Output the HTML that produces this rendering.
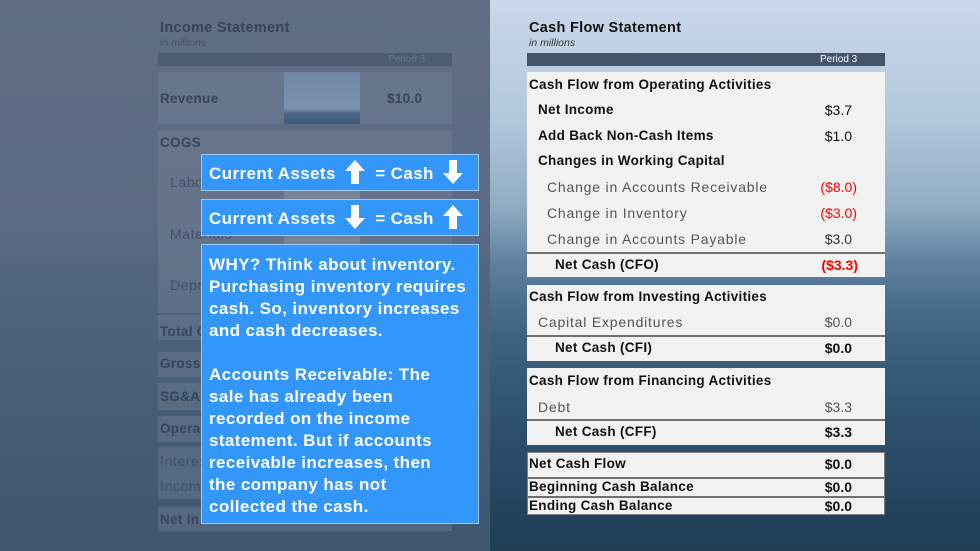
<!DOCTYPE html>
<html><head><meta charset="utf-8"><style>
*{margin:0;padding:0;box-sizing:border-box}
body{width:980px;height:551px;overflow:hidden;position:relative;font-family:"Liberation Sans",sans-serif;
background:linear-gradient(180deg,#c9d8ea 0%,#b3c7dc 22%,#8eaac2 38%,#5d809e 48%,#3d6482 60%,#2c506c 78%,#1f3d55 100%);}
.a{position:absolute}
#left{left:0;top:0;width:490px;height:551px;background:linear-gradient(180deg,#5f6e85 0%,#5b6b83 40%,#4b6079 62%,#3f5670 100%)}
.lb{position:absolute;background:rgba(120,135,155,.35)}
.lt{position:absolute;color:#37455a;font-weight:bold;font-size:13.5px;letter-spacing:.3px}
.lt2{position:absolute;color:#42506a;font-size:14px;letter-spacing:.6px}
.blue{position:absolute;left:201px;width:278px;background:#3396fb;border:1px solid #9cc8f2;color:#fff;font-weight:bold;font-size:17px;letter-spacing:.4px}
.row{position:absolute;left:0;width:100%;height:20px;font-size:13.5px;letter-spacing:.3px;color:#111}
.row span{position:absolute;top:0}
.g{font-size:14px;letter-spacing:.8px;color:#555}
.v{right:33px;text-align:right;font-size:14px;letter-spacing:0}
.box{position:absolute;left:527px;width:358px;background:#f2f2f2}
.b{font-weight:bold}
.r{color:#f00}
.ln{position:absolute;left:0;width:100%;height:2px;background:#6f6f6f}
</style></head><body>
<div class="a" id="left">
 <div class="lt" style="left:160px;top:20px;font-size:14.5px">Income Statement</div>
 <div class="a" style="left:160px;top:37px;font-size:10.5px;font-style:italic;color:#46536a">in millions</div>
 <div class="a" style="left:158px;top:53px;width:294px;height:13px;background:#4c5c73"></div>
 <div class="a" style="left:388px;top:54px;font-size:10px;color:#66768c">Period 3</div>
 <div class="lb" style="left:158px;top:72px;width:294px;height:52px"></div>
 <div class="a" style="left:284px;top:72px;width:76px;height:52px;background:linear-gradient(180deg,#6f88a6 0%,#7c93ae 70%,#4a6485 80%,#405a7a 100%)"></div>
 <div class="lt" style="left:160px;top:91px">Revenue</div>
 <div class="lt" style="left:387px;top:91px">$10.0</div>
 <div class="lb" style="left:158px;top:130px;width:294px;height:183px"></div>
 <div class="a" style="left:284px;top:185px;width:76px;height:128px;background:rgba(140,150,165,.5)"></div>
 <div class="lt" style="left:160px;top:135px">COGS</div>
 <div class="lt2" style="left:170px;top:174px">Labor</div>
 <div class="lt2" style="left:170px;top:226px">Materials</div>
 <div class="lt2" style="left:170px;top:277px">Depr</div>
 <div class="lb" style="left:158px;top:315px;width:294px;height:25px"></div><div class="lt" style="left:160px;top:324px">Total C</div>
 <div class="lb" style="left:158px;top:352px;width:294px;height:25px"></div><div class="lt" style="left:160px;top:356px">Gross</div>
 <div class="lb" style="left:158px;top:383px;width:294px;height:27px"></div><div class="lt" style="left:160px;top:389px">SG&amp;A</div>
 <div class="lb" style="left:158px;top:416px;width:294px;height:26px"></div><div class="lt" style="left:160px;top:421px">Opera</div>
 <div class="lb" style="left:158px;top:447px;width:294px;height:52px"></div><div class="lt2" style="left:160px;top:453px">Interest</div><div class="lt2" style="left:160px;top:478px">Income</div>
 <div class="lb" style="left:158px;top:507px;width:294px;height:24px"></div><div class="lt" style="left:160px;top:512px">Net In</div>
</div>

<div class="blue" style="top:154px;height:37px;padding:5px 0 0 7px">Current Assets
 <svg width="20" height="24" viewBox="0 0 20 24" style="vertical-align:-5px;margin-left:4px"><path d="M10 0 L20 11 L14 11 L14 24 L6 24 L6 11 L0 11Z" fill="#fff"/></svg> &nbsp;= Cash
 <svg width="20" height="24" viewBox="0 0 20 24" style="vertical-align:-5px;margin-left:4px"><path d="M10 24 L20 13 L14 13 L14 0 L6 0 L6 13 L0 13Z" fill="#fff"/></svg></div>
<div class="blue" style="top:199px;height:37px;padding:5px 0 0 7px">Current Assets
 <svg width="20" height="24" viewBox="0 0 20 24" style="vertical-align:-5px;margin-left:4px"><path d="M10 24 L20 13 L14 13 L14 0 L6 0 L6 13 L0 13Z" fill="#fff"/></svg> &nbsp;= Cash
 <svg width="20" height="24" viewBox="0 0 20 24" style="vertical-align:-5px;margin-left:4px"><path d="M10 0 L20 11 L14 11 L14 24 L6 24 L6 11 L0 11Z" fill="#fff"/></svg></div>
<div class="blue" style="top:244px;height:280px;padding:9px 0 0 7px;line-height:22px">WHY? Think about inventory.<br>Purchasing inventory requires<br>cash. So, inventory increases<br>and cash decreases.<br><br>Accounts Receivable: The<br>sale has already been<br>recorded on the income<br>statement. But if accounts<br>receivable increases, then<br>the company has not<br>collected the cash.</div>

<div class="a b" style="left:529px;top:20px;font-size:14.5px;letter-spacing:.3px;color:#111">Cash Flow Statement</div>
<div class="a" style="left:529px;top:37px;font-size:10.5px;font-style:italic;color:#333">in millions</div>
<div class="a" style="left:527px;top:53px;width:358px;height:13px;background:#44546a"></div>
<div class="a" style="left:820px;top:54px;font-size:10px;color:#fff">Period 3</div>

<div class="box" style="top:72px;height:205px">
 <div class="row b" style="top:5px"><span style="left:2px">Cash Flow from Operating Activities</span></div>
 <div class="row b" style="top:30px"><span style="left:11px">Net Income</span><span class="v" style="font-weight:normal">$3.7</span></div>
 <div class="row b" style="top:56px"><span style="left:11px">Add Back Non-Cash Items</span><span class="v" style="font-weight:normal">$1.0</span></div>
 <div class="row b" style="top:81px"><span style="left:11px">Changes in Working Capital</span></div>
 <div class="row g" style="top:107px"><span style="left:20px">Change in Accounts Receivable</span><span class="v r" style="right:28px">($8.0)</span></div>
 <div class="row g" style="top:133px"><span style="left:20px">Change in Inventory</span><span class="v r" style="right:28px">($3.0)</span></div>
 <div class="row g" style="top:159px"><span style="left:20px">Change in Accounts Payable</span><span class="v" style="color:#333">$3.0</span></div>
 <div class="ln" style="top:180px"></div>
 <div class="row b" style="top:185px"><span style="left:28px">Net Cash (CFO)</span><span class="v r" style="right:27px">($3.3)</span></div>
</div>
<div class="box" style="top:285px;height:76px">
 <div class="row b" style="top:4px"><span style="left:2px">Cash Flow from Investing Activities</span></div>
 <div class="row g" style="top:29px"><span style="left:11px">Capital Expenditures</span><span class="v">$0.0</span></div>
 <div class="ln" style="top:50px"></div>
 <div class="row b" style="top:55px"><span style="left:28px">Net Cash (CFI)</span><span class="v">$0.0</span></div>
</div>
<div class="box" style="top:368px;height:77px">
 <div class="row b" style="top:5px"><span style="left:2px">Cash Flow from Financing Activities</span></div>
 <div class="row g" style="top:31px"><span style="left:11px">Debt</span><span class="v">$3.3</span></div>
 <div class="ln" style="top:51px"></div>
 <div class="row b" style="top:56px"><span style="left:28px">Net Cash (CFF)</span><span class="v">$3.3</span></div>
</div>
<div class="box" style="top:452px;height:63px;border:1px solid #7f7f7f">
 <div class="row b" style="top:3px"><span style="left:1px">Net Cash Flow</span><span class="v" style="right:32px">$0.0</span></div>
 <div class="ln" style="top:24px"></div>
 <div class="row b" style="top:26px"><span style="left:1px">Beginning Cash Balance</span><span class="v" style="right:32px">$0.0</span></div>
 <div class="ln" style="top:43px"></div>
 <div class="row b" style="top:45px"><span style="left:1px">Ending Cash Balance</span><span class="v" style="right:32px">$0.0</span></div>
</div>
</body></html>
